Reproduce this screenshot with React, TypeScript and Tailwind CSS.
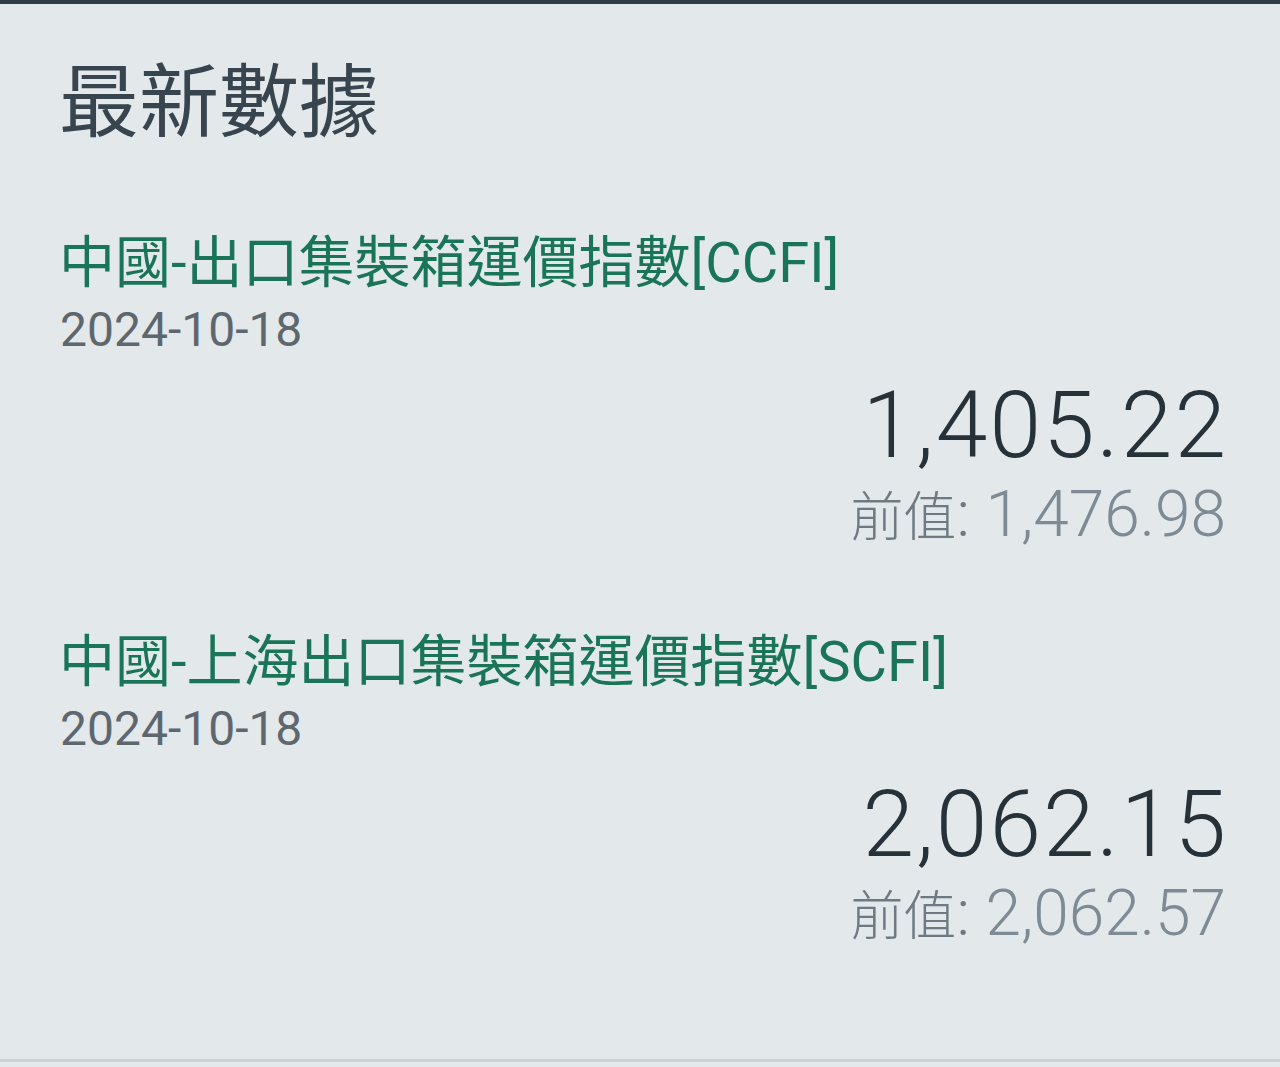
const FONT = "font-['Roboto','Noto_Sans_CJK_TC',sans-serif]";

const ITEMS = [
  {
    name: "中國-出口集裝箱運價指數[CCFI]",
    date: "2024-10-18",
    value: "1,405.22",
    prev: "1,476.98",
  },
  {
    name: "中國-上海出口集裝箱運價指數[SCFI]",
    date: "2024-10-18",
    value: "2,062.15",
    prev: "2,062.57",
  },
];

export default function App() {
  return (
    <div className={`flex h-[1067px] flex-col bg-[#e3e8eb] ${FONT}`}>
      <div className="h-[4px] bg-[#323c45]" />
      <main className="flex flex-1 flex-col pl-[59px] pr-[54px]">
        <h1 className="mt-[59px] text-[80px] leading-[80px] font-normal text-[#38454e]">
          最新數據
        </h1>
        <div className="mt-[86px] flex flex-col gap-[69px]">
          {ITEMS.map((item) => (
            <section key={item.name} className="flex flex-col">
              <div className="text-[56px] leading-[68px] text-[#1a7558]">
                {item.name}
              </div>
              <div className="pl-[1px] text-[48px] leading-[66px] text-[#5e676e]">
                {item.date}
              </div>
              <div className="mt-[15px] -mr-[2px] text-right text-[93px] leading-[96px] font-light tracking-[2px] text-[#263238]">
                {item.value}
              </div>
              <div className="text-right text-[64px] leading-[82px] font-light text-[#7f8b94]">
                <span className="text-[53px] text-[#6e7981]">前值</span>
                <span className="text-[#6e7981]">: </span>
                {item.prev}
              </div>
            </section>
          ))}
        </div>
      </main>
      <div className="h-[3px] bg-[#cdd3d7]" />
      <div className="h-[5px]" />
    </div>
  );
}
